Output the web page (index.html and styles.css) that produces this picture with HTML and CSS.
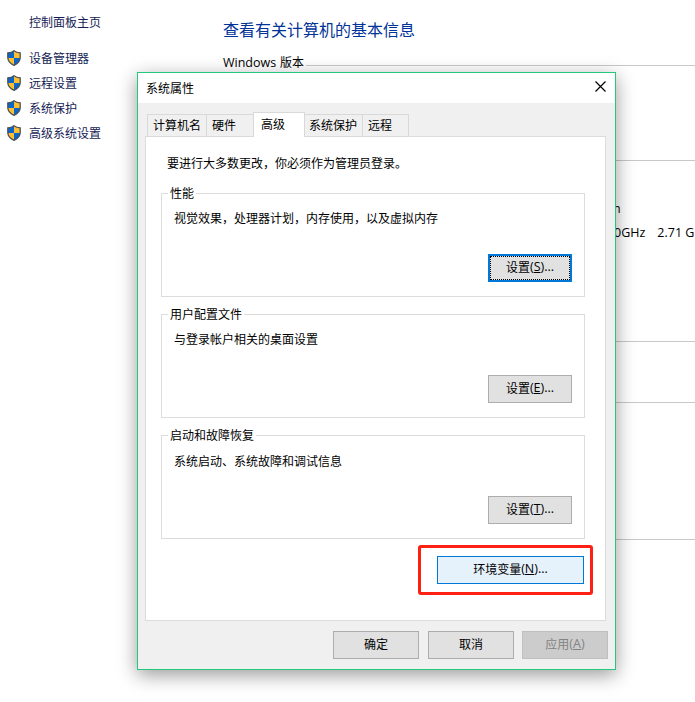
FILE: index.html
```
<!DOCTYPE html>
<html lang="zh-CN">
<head>
<meta charset="utf-8">
<title>系统属性</title>
<link rel="stylesheet" href="styles.css">
</head>
<body>
<svg width="0" height="0" class="defs" aria-hidden="true">
  <symbol id="shield" viewBox="0 0 14 16">
    <clipPath id="shield-clip"><path d="M7 .8C5.3 2.2 3.2 2.8 .8 2.9V7.5C.8 11.3 3.5 13.7 7 15.3C10.500 13.700 13.200 11.300 13.200 7.500V2.900C10.800 2.800 8.700 2.200 7 .800Z"/></clipPath>
    <g clip-path="url(#shield-clip)">
      <path fill="#0b66c9" d="M0 0H7V8H0Z M7 8H14V16H7Z"/>
      <path fill="#fdbf32" d="M7 0H14V8H7Z M0 8H7V16H0Z"/>
    </g>
    <path fill="none" stroke="#4c5054" stroke-width="1.300" d="M7 .8C5.3 2.2 3.2 2.8 .8 2.9V7.5C.8 11.3 3.5 13.7 7 15.3C10.500 13.700 13.200 11.300 13.200 7.500V2.900C10.800 2.800 8.700 2.200 7 .800Z"/>
  </symbol>
</svg>
<div class="page">
  <nav class="sidebar">
    <a class="home">控制面板主页</a>
    <a class="task"><svg><use href="#shield"/></svg>设备管理器</a>
    <a class="task"><svg><use href="#shield"/></svg>远程设置</a>
    <a class="task"><svg><use href="#shield"/></svg>系统保护</a>
    <a class="task"><svg><use href="#shield"/></svg>高级系统设置</a>
  </nav>
  <main class="info">
    <h1>查看有关计算机的基本信息</h1>
    <div class="section-title"><span><span class="win">Windows</span>版本</span></div>
    <section class="edition"></section>
    <section class="system">
      <p class="maker">n</p>
      <p class="cpu"><span>0GHz</span><span>2.71 G</span></p>
    </section>
    <section class="name"></section>
    <section class="activation"></section>
    <section class="rest"></section>
  </main>
</div>

<div class="dialog">
  <header class="titlebar">
    <span>系统属性</span>
    <svg class="close" viewBox="0 0 11 11"><path d="M.5 .5L10.500 10.500M10.500 .5L.5 10.500"/></svg>
  </header>
  <div class="tabs">
    <div class="tab t1">计算机名</div>
    <div class="tab t2">硬件</div>
    <div class="tab active">高级</div>
    <div class="tab t4">系统保护</div>
    <div class="tab t5">远程</div>
  </div>
  <div class="panel">
    <p class="note">要进行大多数更改，你必须作为管理员登录。</p>
    <section class="group">
      <h2>性能</h2>
      <p>视觉效果，处理器计划，内存使用，以及虚拟内存</p>
      <button class="btn focus">设置<span class="key">(<u>S</u>)...</span></button>
    </section>
    <section class="group">
      <h2>用户配置文件</h2>
      <p>与登录帐户相关的桌面设置</p>
      <button class="btn">设置<span class="key">(<u>E</u>)...</span></button>
    </section>
    <section class="group">
      <h2>启动和故障恢复</h2>
      <p>系统启动、系统故障和调试信息</p>
      <button class="btn">设置<span class="key">(<u>T</u>)...</span></button>
    </section>
    <div class="highlight">
      <button class="btn env">环境变量<span class="key">(<u>N</u>)...</span></button>
    </div>
  </div>
  <footer class="actions">
    <button class="btn">确定</button>
    <button class="btn">取消</button>
    <button class="btn disabled">应用<span class="key">(<u>A</u>)</span></button>
  </footer>
</div>
</body>
</html>
```
FILE: styles.css
```
* { box-sizing: border-box; margin: 0; padding: 0; }
body {
  width: 695px;
  height: 702px;
  overflow: hidden;
  background: #fff;
  color: #000;
  font: 12px/16px "Noto Sans CJK SC", sans-serif;
  position: relative;
}
.defs { position: absolute; }
.page { display: flex; height: 702px; }

.sidebar { width: 223px; padding: 14px 0 0 7px; color: #151c55; display: flex; flex-direction: column; }
.home { margin: 0 0 20px 22px; }
.task { display: flex; align-items: center; gap: 8px; height: 16px; margin-bottom: 9px; }
.task svg { width: 14px; height: 16px; }

.info { flex: 1; padding-top: 17px; }
.info h1 { font-size: 16px; line-height: 24px; font-weight: 400; color: #003399; }
.section-title { display: flex; align-items: center; gap: 2px; height: 16px; margin-top: 16px; }
.section-title > span { display: block; height: 16px; margin-top: -7px; }
.section-title::after { content: ""; flex: 1; height: 1px; background: #c8c8c8; }
.win { display: inline-block; width: 57px; font-family: "Open Sans", sans-serif; font-size: 12.500px; }
.info section { border-bottom: 1px solid #c8c8c8; }
.edition { height: 88px; }
.system { height: 181px; padding: 40px 0 0 390px; font-family: "Open Sans", sans-serif; font-size: 12.500px; }
.system p { height: 16px; white-space: nowrap; }
.system .cpu { margin: 8px 0 0 1px; display: flex; gap: 12px; }
.name { height: 61px; }
.activation { height: 137px; }
.info .rest { border: 0; }

.dialog {
  position: absolute;
  left: 137px;
  top: 72px;
  width: 479px;
  height: 598px;
  border: 1px solid #24c77b;
  background: #f0f0f0;
  box-shadow: 0 5px 18px rgba(0, 0, 0, .4);
}
.titlebar { display: flex; justify-content: space-between; align-items: center; height: 30px; padding: 0 9px 0 8px; background: #fff; }
.titlebar span { margin-bottom: 1px; }
.close { width: 11px; height: 11px; margin-bottom: 3px; fill: none; stroke: #000; stroke-width: 1.200; }
.tabs { display: flex; align-items: flex-end; height: 34px; padding-left: 9px; margin-bottom: -1px; position: relative; }
.tab { height: 23px; border: 1px solid #d9d9d9; border-right: 0; padding: 2px 0 0 5px; }
.t1 { width: 59px; }
.t2 { width: 47px; }
.t4 { width: 57px; border-left: 0; }
.t4.tab { padding-left: 4px; }
.t5 { width: 47px; border-right: 1px solid #d9d9d9; }
.tab.active { width: 52px; height: 25px; background: #fff; border-right: 1px solid #d9d9d9; border-bottom: 0; padding: 3px 0 0 7px; }
.panel { width: 461px; height: 485px; margin-left: 7px; border: 1px solid #dcdcdc; background: #fff; padding: 18px 0 0 15px; }
.note { padding-left: 6px; height: 38px; }
.group { width: 424px; height: 104px; margin-bottom: 17px; border: 1px solid #dcdcdc; display: flex; flex-direction: column; align-items: flex-start; }
.group h2 { font-size: 12px; line-height: 16px; height: 16px; font-weight: 400; background: #fff; margin: -9px 0 0 6px; padding: 0 2px; }
.group p { margin: 9px 0 28px 12px; }
.group:nth-of-type(3) p { margin: 10px 0 27px 12px; }
.group .btn { margin-left: 326px; }
.btn {
  display: flex;
  align-items: center;
  justify-content: center;
  width: 84px;
  height: 28px;
  flex: none;
  border: 1px solid #adadad;
  background: #e1e1e1;
  color: #000;
  font: inherit;
  padding-bottom: 2px;
}
.key { font-family: "Open Sans", sans-serif; font-size: 12.500px; }
.key u { text-underline-offset: 1px; text-decoration-thickness: 1px; }
.btn.focus { border: 2px solid #0078d7; outline: 1px dotted #000; outline-offset: -3px; }
.highlight { width: 175px; height: 50px; margin: -11px 0 0 257px; border: 3px solid #ff2014; border-radius: 3px; padding: 8px 0 0 16px; }
.btn.env { width: 147px; border-color: #0078d7; background: #e5f1fb; }
.actions { display: flex; padding: 10px 0 0 195px; gap: 9px; }
.actions .btn { width: 86px; }
.actions .btn:nth-child(2) { margin-right: -1px; }
.btn.disabled { background: #ccc; border-color: #bfbfbf; color: #838383; }
```
